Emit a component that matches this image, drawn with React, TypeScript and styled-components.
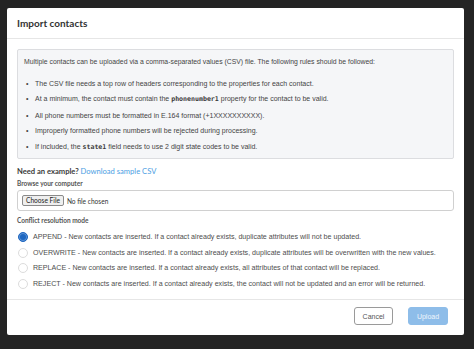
import styled, { createGlobalStyle } from 'styled-components';
import { useState } from 'react';

/* ===== global ===== */
const Global = createGlobalStyle`
  html, body { margin: 0; padding: 0; background: #242424; }
  body { font-family: 'Liberation Sans', Arial, sans-serif; }
  * { box-sizing: border-box; }
`;

/* ===== styled ===== */
const Backdrop = styled.div`
  width: 474px;
  height: 349px;
  padding: 8px 10px 14px 7px;
  background: #242424;
`;
const Modal = styled.div`
  width: 457px;
  height: 327px;
  background: #fff;
  border-radius: 2px;
  display: flex;
  flex-direction: column;
`;
const Header = styled.header`
  height: 31px;
  display: flex;
  align-items: center;
  padding: 0 10px;
  border-bottom: 1px solid #e6e6e6;
`;
const Title = styled.h1`
  margin: 0;
  font-family: Lato, 'Liberation Sans', sans-serif;
  font-size: 10px;
  font-weight: 700;
  color: #333;
`;
const Body = styled.section`
  flex: 1;
  padding: 10px 10px 0 10px;
  color: #444;
  font-size: 7px;
`;
const RulesBox = styled.div`
  background: #f5f6f8;
  border: 1px solid #dcdde0;
  border-radius: 2px;
  padding: 7px 7px 3px 6px;
`;
const Intro = styled.p`
  margin: 0;
  line-height: 10px;
  font-size: 6.85px;
`;
const Rules = styled.ul`
  list-style: none;
  margin: 9px 0 0;
  padding: 0 0 0 2px;
`;
const Rule = styled.li`
  display: flex;
  line-height: 15.4px;
  &::before {
    content: '•';
    width: 9px;
    flex: none;
  }
`;
const Code = styled.code`
  font-family: 'DejaVu Sans Mono', 'Liberation Mono', monospace;
  font-weight: 700;
  font-size: 6.6px;
  color: #3a3a3a;
`;
const Example = styled.p`
  margin: 7px 0 0;
  line-height: 10px;
  font-family: Lato, 'Liberation Sans', sans-serif;
  font-size: 7.6px;
  font-weight: 700;
  color: #3a3a3a;
  a {
    font-weight: 400;
    color: #4b9ee3;
    text-decoration: none;
  }
`;
const Label = styled.div<{ $gap: number }>`
  margin-top: ${({ $gap }) => $gap}px;
  line-height: 9px;
  font-family: Lato, 'Liberation Sans', sans-serif;
  font-size: 6.5px;
  font-weight: 700;
  color: #555;
`;
const FileBox = styled.div`
  margin-top: 2px;
  height: 21px;
  border: 1px solid #d0d0d0;
  border-radius: 3px;
  display: flex;
  align-items: center;
  gap: 3px;
  padding: 0 4px;
  font-family: Lato, 'Liberation Sans', sans-serif;
  font-size: 6.6px;
  color: #333;
`;
const FileButton = styled.button`
  height: 11px;
  padding: 0 3px;
  font: inherit;
  color: #222;
  background: #efefef;
  border: 1px solid #8a8a8a;
  border-radius: 2px;
  line-height: 9px;
`;
const Radios = styled.div`
  margin-top: 4px;
  display: flex;
  flex-direction: column;
`;
const RadioRow = styled.label`
  height: 15.7px;
  display: flex;
  align-items: center;
  gap: 5px;
  padding-left: 1px;
  font-size: 7.1px;
  color: #4e4e4e;
  cursor: pointer;
`;
const RadioDot = styled.span<{ $checked?: boolean }>`
  width: 10px;
  height: 10px;
  flex: none;
  border-radius: 50%;
  border: 1px solid ${({ $checked }) => ($checked ? '#1f67c0' : '#dcdcdc')};
  background: ${({ $checked }) => ($checked ? '#1f67c0' : '#fff')};
  box-shadow: ${({ $checked }) => ($checked ? 'inset 0 0 0 1px #5d93d6' : 'none')};
`;
const Footer = styled.footer`
  height: 36px;
  border-top: 1px solid #e6e6e6;
  display: flex;
  justify-content: flex-end;
  align-items: flex-start;
  gap: 15px;
  padding: 7px 16px 0;
`;
const Button = styled.button<{ $primary?: boolean }>`
  height: 18px;
  width: ${({ $primary }) => ($primary ? 40 : 39)}px;
  padding: 0;
  font-family: 'Liberation Sans', Arial, sans-serif;
  font-size: 7px;
  border-radius: 3px;
  border: 1px solid ${({ $primary }) => ($primary ? '#8ebde9' : '#9a9a9a')};
  background: ${({ $primary }) => ($primary ? '#8ebde9' : '#fff')};
  color: ${({ $primary }) => ($primary ? '#eef5fc' : '#555')};
`;

const modes = [
  ['APPEND', 'New contacts are inserted. If a contact already exists, duplicate attributes will not be updated.'],
  ['OVERWRITE', 'New contacts are inserted. If a contact already exists, duplicate attributes will be overwritten with the new values.'],
  ['REPLACE', 'New contacts are inserted. If a contact already exists, all attributes of that contact will be replaced.'],
  ['REJECT', 'New contacts are inserted. If a contact already exists, the contact will not be updated and an error will be returned.'],
];

/* ===== component ===== */
export default function App() {
  const [mode, setMode] = useState('APPEND');

  return (
    <Backdrop>
      <Global />
      <Modal>
        <Header>
          <Title>Import contacts</Title>
        </Header>

        <Body>
          <RulesBox>
            <Intro>
              Multiple contacts can be uploaded via a comma-separated values (CSV) file. The following rules should be
              followed:
            </Intro>
            <Rules>
              <Rule>The CSV file needs a top row of headers corresponding to the properties for each contact.</Rule>
              <Rule>
                <span>
                  At a minimum, the contact must contain the <Code>phonenumber1</Code> property for the contact to be
                  valid.
                </span>
              </Rule>
              <Rule>All phone numbers must be formatted in E.164 format (+1XXXXXXXXXX).</Rule>
              <Rule>Improperly formatted phone numbers will be rejected during processing.</Rule>
              <Rule>
                <span>
                  If included, the <Code>state1</Code> field needs to use 2 digit state codes to be valid.
                </span>
              </Rule>
            </Rules>
          </RulesBox>

          <Example>
            Need an example? <a href="#">Download sample CSV</a>
          </Example>

          <Label $gap={3}>Browse your computer</Label>
          <FileBox>
            <FileButton type="button">Choose File</FileButton>
            <span>No file chosen</span>
          </FileBox>

          <Label $gap={5}>Conflict resolution mode</Label>
          <Radios>
            {modes.map(([key, text]) => (
              <RadioRow key={key} onClick={() => setMode(key)}>
                <RadioDot $checked={mode === key} />
                {key} - {text}
              </RadioRow>
            ))}
          </Radios>
        </Body>

        <Footer>
          <Button type="button">Cancel</Button>
          <Button type="button" $primary>
            Upload
          </Button>
        </Footer>
      </Modal>
    </Backdrop>
  );
}
